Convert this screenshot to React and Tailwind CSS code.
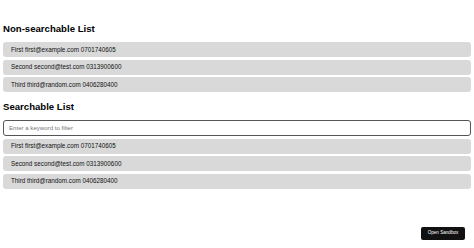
const people = [
  { name: "First", email: "first@example.com", phone: "0701740605" },
  { name: "Second", email: "second@test.com", phone: "0313900600" },
  { name: "Third", email: "third@random.com", phone: "0406280400" },
];

function Item({ person }) {
  return (
    <div className="h-[15px] flex items-center pl-[8px] bg-[#d9d9d9] rounded-[3px] text-[6.3px] text-[#111]">
      {person.name} {person.email} {person.phone}
    </div>
  );
}

function List({ items }) {
  return (
    <div className="flex flex-col gap-[2.5px]">
      {items.map((p) => (
        <Item key={p.name} person={p} />
      ))}
    </div>
  );
}

export default function App() {
  return (
    <div
      className="relative w-[474px] h-[248px] bg-white px-[3px] pt-[23px]"
      style={{ fontFamily: '"Liberation Sans", Arial, sans-serif' }}
    >
      <h2 className="text-[9.6px] leading-[12px] font-bold text-black mb-[7px]">
        Non-searchable List
      </h2>
      <List items={people} />

      <h2 className="text-[9.6px] leading-[12px] font-bold text-black mt-[8.5px] mb-[7px]">
        Searchable List
      </h2>
      <input
        className="block w-full h-[16px] border border-[#555] rounded-[3px] px-[5px] text-[6.1px] outline-none placeholder:text-[#777] mb-[3px]"
        placeholder="Enter a keyword to filter"
      />
      <List items={people} />

      <button className="absolute right-[9px] bottom-[8px] w-[44px] h-[13px] bg-[#111] text-white text-[4.6px] rounded-[2px] flex items-center justify-center">
        Open Sandbox
      </button>
    </div>
  );
}
